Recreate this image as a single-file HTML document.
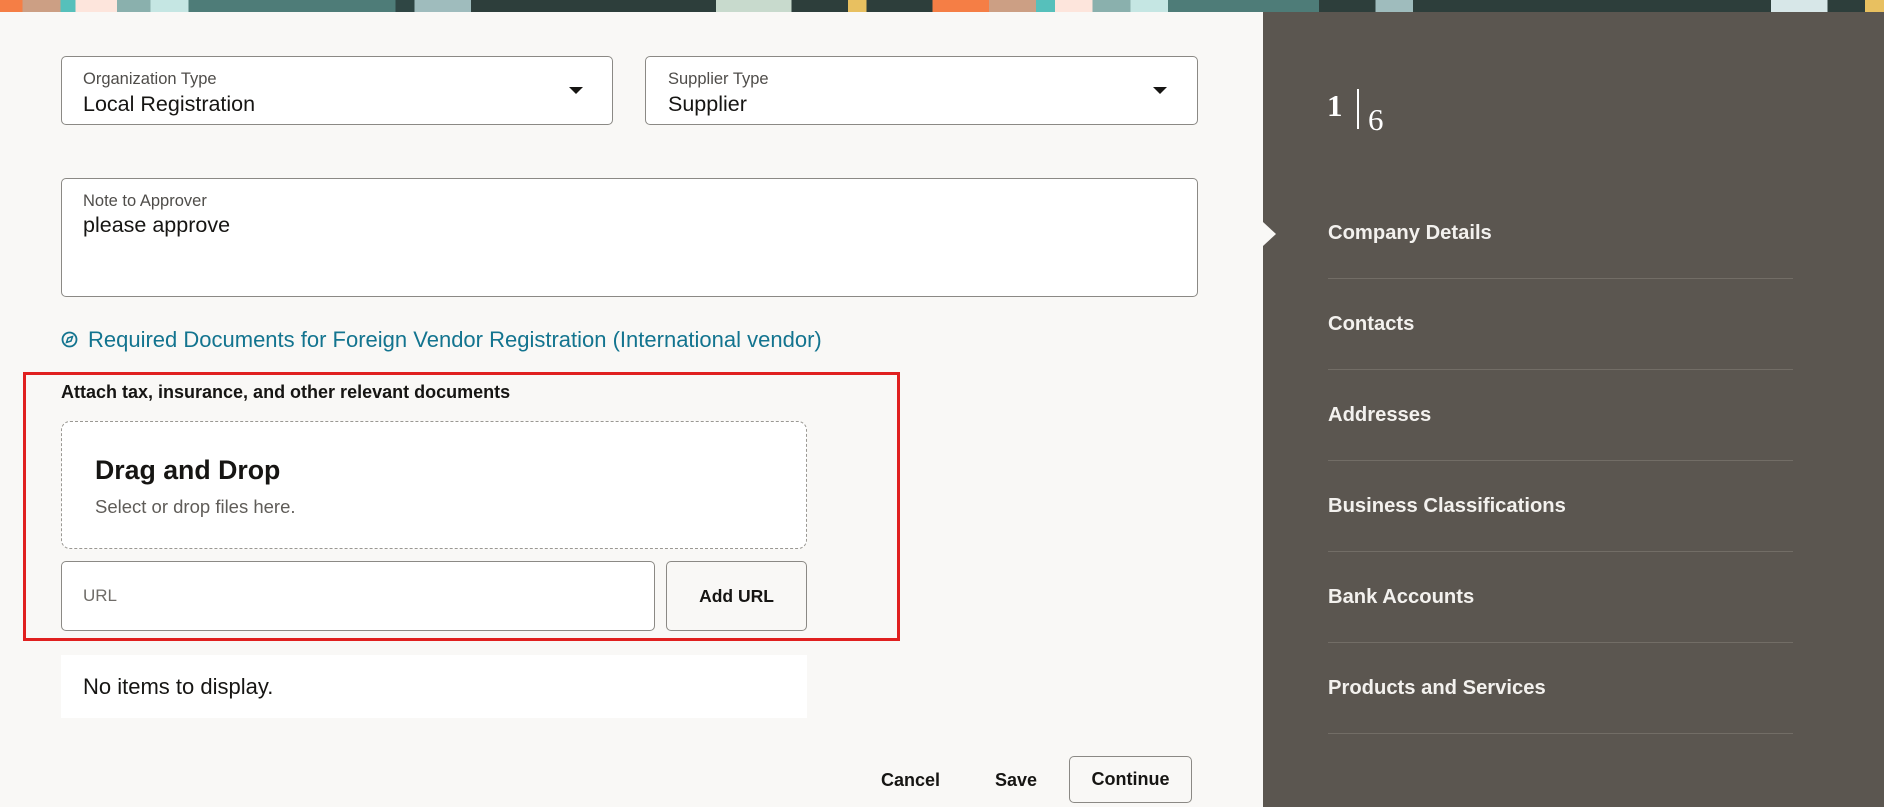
<!DOCTYPE html>
<html><head><meta charset="utf-8"><style>
*{box-sizing:border-box;margin:0;padding:0}
body{width:1884px;height:807px;overflow:hidden;background:#f9f8f6;font-family:"Liberation Sans",sans-serif;position:relative;color:#161513}
.abs{position:absolute}
.banner{left:0;top:0;width:1884px;height:12px;background:linear-gradient(90deg,#f57e45 0 1.2%,#cc9f84 1.2% 3.2%,#56c0bb 3.2% 4%,#fde5dc 4% 6.2%,#8ab0ad 6.2% 8%,#c5e6e3 8% 10%,#4e7c78 10% 21%,#2f4644 21% 22%,#9fbcbd 22% 25%,#2d3e3b 25% 38%,#c8dacd 38% 42%,#2d3e3b 42% 45%,#e8c060 45% 46%,#2d3e3b 46% 49.5%,#f57e45 49.5% 52.5%,#cc9f84 52.5% 55%,#56c0bb 55% 56%,#fde5dc 56% 58%,#8ab0ad 58% 60%,#c5e6e3 60% 62%,#4e7c78 62% 70%,#2d3e3b 70% 73%,#9fbcbd 73% 75%,#2d3e3b 75% 94%,#d7e7e8 94% 97%,#2d3e3b 97% 99%,#e8c060 99%)}
.side{left:1263px;top:12px;width:621px;height:795px;background:#5b5650}
.box{border:1px solid #8b8985;border-radius:5px;background:#fff}
.lbl{font-size:16.5px;color:#4f4d4a}
.val{font-size:21.5px;color:#161513}
.caret{width:0;height:0;border-left:7px solid transparent;border-right:7px solid transparent;border-top:7px solid #161513}
.nav{left:1328px;font-size:20.2px;font-weight:bold;color:#f3f1ee}
.sep{left:1328px;width:465px;height:1px;background:#726d66}
</style></head><body>
<div class="abs banner"></div>
<div class="abs side"></div>

<div class="abs box" style="left:61px;top:56px;width:552px;height:69px"></div>
<div class="abs lbl" style="left:83px;top:70px">Organization Type</div>
<div class="abs val" style="left:83px;top:92px">Local Registration</div>
<div class="abs caret" style="left:569px;top:87px"></div>

<div class="abs box" style="left:645px;top:56px;width:553px;height:69px"></div>
<div class="abs lbl" style="left:668px;top:70px">Supplier Type</div>
<div class="abs val" style="left:668px;top:92px">Supplier</div>
<div class="abs caret" style="left:1153px;top:87px"></div>

<div class="abs box" style="left:61px;top:178px;width:1137px;height:119px"></div>
<div class="abs lbl" style="left:83px;top:192px">Note to Approver</div>
<div class="abs val" style="left:83px;top:213px">please approve</div>

<svg class="abs" style="left:61px;top:331px" width="17" height="17" viewBox="0 0 17 17"><circle cx="8.5" cy="8.5" r="7" fill="none" stroke="#13748f" stroke-width="1.8"/><path d="M5.5 11.5 L7 7 L11.5 5.5 L10 10 Z" fill="none" stroke="#13748f" stroke-width="1.5"/></svg>
<div class="abs" style="left:88px;top:327px;font-size:22px;color:#13748f">Required Documents for Foreign Vendor Registration (International vendor)</div>

<div class="abs" style="left:23px;top:372px;width:877px;height:269px;border:3px solid #e0201f"></div>
<div class="abs" style="left:61px;top:382px;font-size:18px;font-weight:bold;color:#161513">Attach tax, insurance, and other relevant documents</div>
<div class="abs" style="left:61px;top:421px;width:746px;height:128px;border:1px dashed #9a9893;border-radius:9px;background:#fff"></div>
<div class="abs" style="left:95px;top:455px;font-size:26.7px;font-weight:bold">Drag and Drop</div>
<div class="abs" style="left:95px;top:496px;font-size:18.5px;color:#5f5c58">Select or drop files here.</div>

<div class="abs box" style="left:61px;top:561px;width:594px;height:70px"></div>
<div class="abs" style="left:83px;top:586px;font-size:17px;color:#6f6c68">URL</div>
<div class="abs box" style="left:666px;top:561px;width:141px;height:70px;background:#f9f8f6;text-align:center;line-height:68px;font-size:17.5px;font-weight:bold">Add URL</div>

<div class="abs" style="left:61px;top:655px;width:746px;height:63px;background:#fff"></div>
<div class="abs" style="left:83px;top:674px;font-size:22px">No items to display.</div>

<div class="abs" style="left:881px;top:770px;font-size:18px;font-weight:bold">Cancel</div>
<div class="abs" style="left:995px;top:770px;font-size:18px;font-weight:bold">Save</div>
<div class="abs box" style="left:1069px;top:756px;width:123px;height:47px;background:#f9f8f6;text-align:center;line-height:45px;font-size:18px;font-weight:bold">Continue</div>

<div class="abs" style="left:1327px;top:88px;font-family:'Liberation Serif',serif;font-size:31px;font-weight:bold;color:#fff">1</div>
<div class="abs" style="left:1357px;top:89px;width:2px;height:40px;background:#fff"></div>
<div class="abs" style="left:1368px;top:102px;font-family:'Liberation Serif',serif;font-size:31px;color:#fff">6</div>

<div class="abs" style="left:1263px;top:222px;width:0;height:0;border-top:12px solid transparent;border-bottom:12px solid transparent;border-left:13px solid #f9f8f6"></div>
<div class="abs nav" style="top:222px">Company Details</div>
<div class="abs sep" style="top:278px"></div>
<div class="abs nav" style="top:313px">Contacts</div>
<div class="abs sep" style="top:369px"></div>
<div class="abs nav" style="top:404px">Addresses</div>
<div class="abs sep" style="top:460px"></div>
<div class="abs nav" style="top:495px">Business Classifications</div>
<div class="abs sep" style="top:551px"></div>
<div class="abs nav" style="top:586px">Bank Accounts</div>
<div class="abs sep" style="top:642px"></div>
<div class="abs nav" style="top:677px">Products and Services</div>
<div class="abs sep" style="top:733px"></div>
</body></html>
